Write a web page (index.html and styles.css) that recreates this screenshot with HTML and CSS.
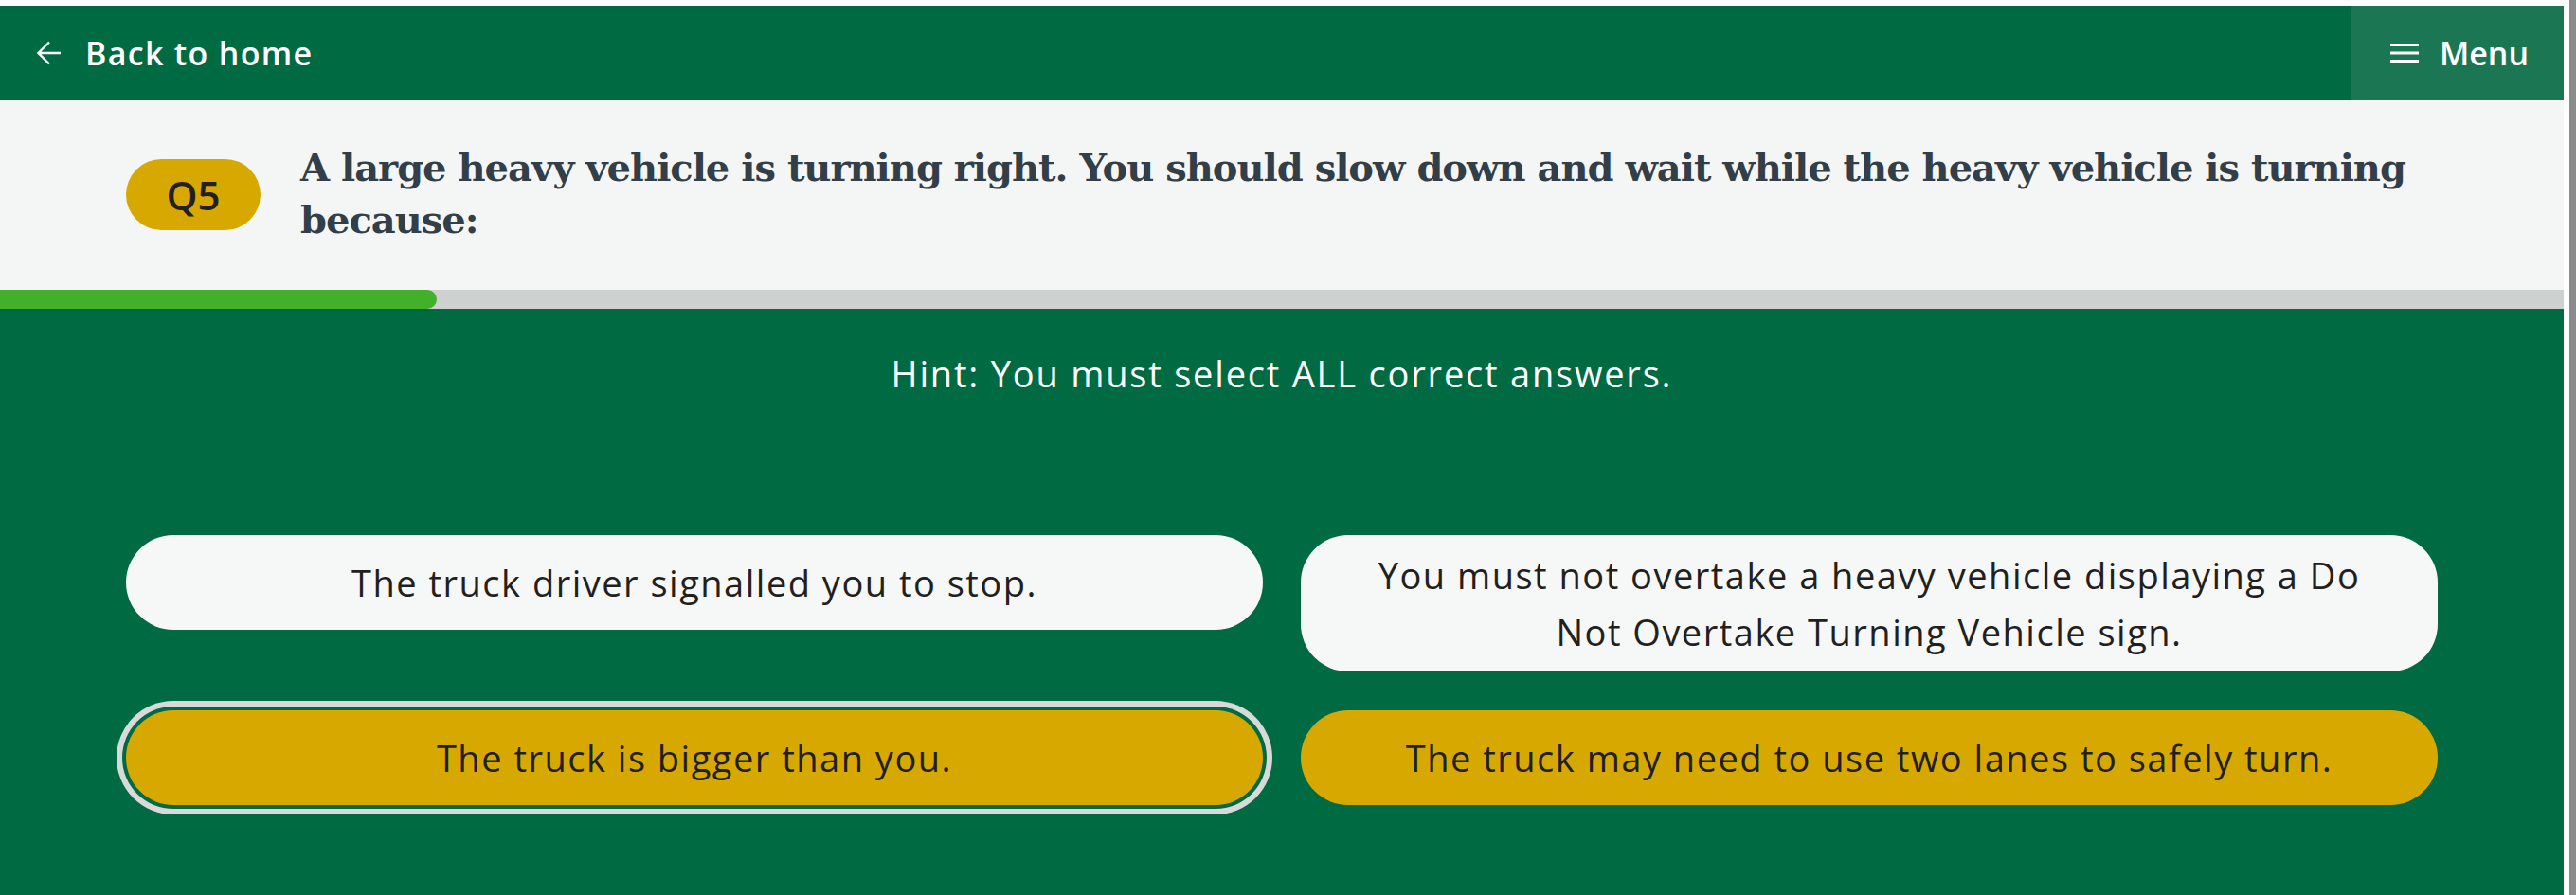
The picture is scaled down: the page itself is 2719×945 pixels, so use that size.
FILE: index.html
```html
<!DOCTYPE html>
<html lang="en">
<head>
    <meta charset="UTF-8">
    <meta name="viewport" content="width=device-width, initial-scale=1.0">
    <title>Road Rules Quiz</title>
    <link rel="stylesheet" href="styles.css">
</head>
<body>

<div class="app">
    <!-- Top bar -->
    <header class="topbar">
        <a class="back-link" href="#">
            <svg class="back-icon" viewBox="0 0 26 26" width="26" height="26">
                <path d="M25 13H2M13 1.5L1.5 13L13 24.5" fill="none" stroke="#fff" stroke-width="2.4"/>
            </svg>
            <span>Back to home</span>
        </a>
        <button class="menu-btn" type="button">
            <svg class="menu-icon" viewBox="0 0 30 20" width="30" height="20">
                <rect x="0" y="0" width="30" height="3" fill="#fff"/>
                <rect x="0" y="8.5" width="30" height="3" fill="#fff"/>
                <rect x="0" y="17" width="30" height="3" fill="#fff"/>
            </svg>
            <span>Menu</span>
        </button>
    </header>

    <!-- Question -->
    <section class="question">
        <div class="q-badge">Q5</div>
        <h1 class="q-title">A large heavy vehicle is turning right. You should slow down and wait while the heavy vehicle is turning because:</h1>
    </section>

    <div class="progress">
        <div class="progress-fill" style="width: 461px"></div>
    </div>

    <!-- Answers -->
    <main class="answers-area">
        <p class="hint">Hint: You must select ALL correct answers.</p>

        <div class="answers">
            <button class="answer" type="button">The truck driver signalled you to stop.</button>
            <button class="answer" type="button">You must not overtake a heavy vehicle displaying a Do Not Overtake Turning Vehicle sign.</button>
            <button class="answer selected focused" type="button">The truck is bigger than you.</button>
            <button class="answer selected" type="button">The truck may need to use two lanes to safely turn.</button>
        </div>
    </main>
</div>

<div class="scrollbar"></div>

</body>
</html>
```

FILE: styles.css
```css
/* Quiz page */
html, body {
    height: 100%;
}

body {
    margin: 0;
    display: flex;
    background-color: #ffffff;
    font-family: "Open Sans", "Noto Sans", sans-serif;
}

.app {
    flex: 1;
    display: flex;
    flex-direction: column;
    margin-top: 6px;
    margin-right: 6px;
    background-color: #006a43;
}

.scrollbar {
    width: 7px;
    background-color: #8b8b8b;
}

/* Top bar */
.topbar {
    height: 100px;
    display: flex;
    justify-content: space-between;
    background-color: #006a43;
}

.back-link {
    display: flex;
    align-items: center;
    gap: 25px;
    padding-left: 39px;
    color: #ffffff;
    text-decoration: none;
    font-size: 34px;
    font-weight: 600;
    letter-spacing: 1.3px;
}

.menu-btn {
    width: 224px;
    display: flex;
    align-items: center;
    justify-content: center;
    gap: 22px;
    border: none;
    background-color: #1b7653;
    color: #ffffff;
    font-family: inherit;
    font-size: 34px;
    font-weight: 600;
    padding: 0 0 0 4px;
}

/* Question */
.question {
    height: 200px;
    box-sizing: border-box;
    display: flex;
    align-items: flex-start;
    gap: 42px;
    padding: 43px 133px 0;
    background-color: #f4f6f5;
}

.q-badge {
    flex: none;
    width: 142px;
    height: 75px;
    margin-top: 19px;
    border-radius: 38px;
    background-color: #d7a900;
    color: #231f20;
    display: flex;
    align-items: center;
    justify-content: center;
    font-size: 42px;
    font-weight: 600;
}

.q-title {
    margin: 0;
    color: #323e48;
    font-family: "DejaVu Serif", "Liberation Serif", serif;
    font-size: 40px;
    font-weight: 700;
    letter-spacing: -1px;
    line-height: 55px;
}

/* Progress */
.progress {
    height: 20px;
    background-color: #cdd2d1;
}

.progress-fill {
    height: 100%;
    border-radius: 0 10px 10px 0;
    background-color: #43b02a;
}

/* Answers */
.answers-area {
    flex: 1;
    padding: 0 133px;
}

.hint {
    margin: 46px 0 0;
    text-align: center;
    color: #ffffff;
    font-size: 38px;
    line-height: 45px;
    letter-spacing: 1.8px;
}

.answers {
    display: grid;
    grid-template-columns: 1fr 1fr;
    gap: 41px 40px;
    align-items: start;
    margin-top: 148px;
}

.answer {
    min-height: 100px;
    box-sizing: border-box;
    padding: 12px 45px;
    border: none;
    border-radius: 50px;
    background-color: #f6f8f7;
    color: #231f20;
    font-family: inherit;
    font-size: 38px;
    font-weight: 500;
    line-height: 60px;
    letter-spacing: 1.5px;
    text-align: center;
}

.answer.selected {
    background-color: #d7a900;
}

.answer.focused {
    box-shadow: 0 0 0 4px #006a43, 0 0 0 10px #d9d9d9;
}
```
